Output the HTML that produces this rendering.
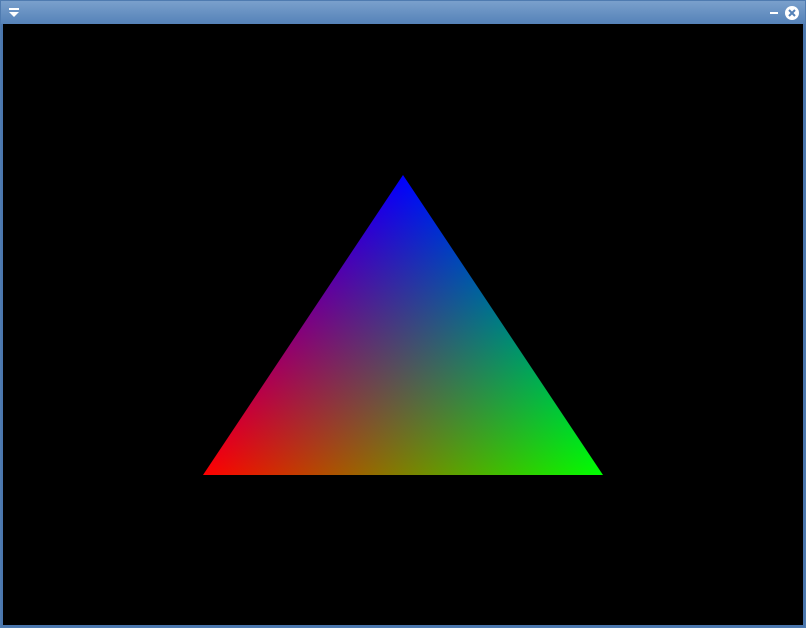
<!DOCTYPE html>
<html><head><style>
html,body{margin:0;padding:0;width:806px;height:628px;overflow:hidden;background:#000}
.frame{position:absolute;left:0;top:0;width:804px;height:626px;border:1px solid #4f7bb0;background:linear-gradient(#6f98c8,#4a76ad 24px);}
.title{position:absolute;left:0;top:0;width:804px;height:23px;background:linear-gradient(#7aa0cc,#5582b8);}
.content{position:absolute;left:2px;top:23px;width:800px;height:601px;background:#000}
</style></head><body>
<div class="frame">
<div class="title">
<svg width="804" height="23" style="position:absolute;left:0;top:0">
<rect x="8" y="7" width="10" height="2" fill="#fff"/>
<path d="M8 11 L18 11 L13 16 Z" fill="#fff"/>
<rect x="769" y="11" width="8" height="2" fill="#fff"/>
<circle cx="791" cy="12" r="7" fill="#fff"/>
<path d="M788 9 L794 15 M794 9 L788 15" stroke="#5582b8" stroke-width="2"/>
</svg>
</div>
<div class="content"></div>
</div>
<svg width="806" height="628" style="position:absolute;left:0;top:0">
<defs>
<linearGradient id="r" gradientUnits="userSpaceOnUse" x1="203" y1="475" x2="479.9" y2="290.4"><stop offset="0" stop-color="#f00"/><stop offset="1" stop-color="#000"/></linearGradient>
<linearGradient id="g" gradientUnits="userSpaceOnUse" x1="603" y1="475" x2="326.1" y2="290.4"><stop offset="0" stop-color="#0f0"/><stop offset="1" stop-color="#000"/></linearGradient>
<linearGradient id="b" gradientUnits="userSpaceOnUse" x1="403" y1="175" x2="403" y2="475"><stop offset="0" stop-color="#00f"/><stop offset="1" stop-color="#000"/></linearGradient>
</defs>
<g style="isolation:isolate">
<polygon points="403,175 203,475 603,475" fill="url(#r)"/>
<polygon points="403,175 203,475 603,475" fill="url(#g)" style="mix-blend-mode:plus-lighter"/>
<polygon points="403,175 203,475 603,475" fill="url(#b)" style="mix-blend-mode:plus-lighter"/>
</g>
</svg>
</body></html>
